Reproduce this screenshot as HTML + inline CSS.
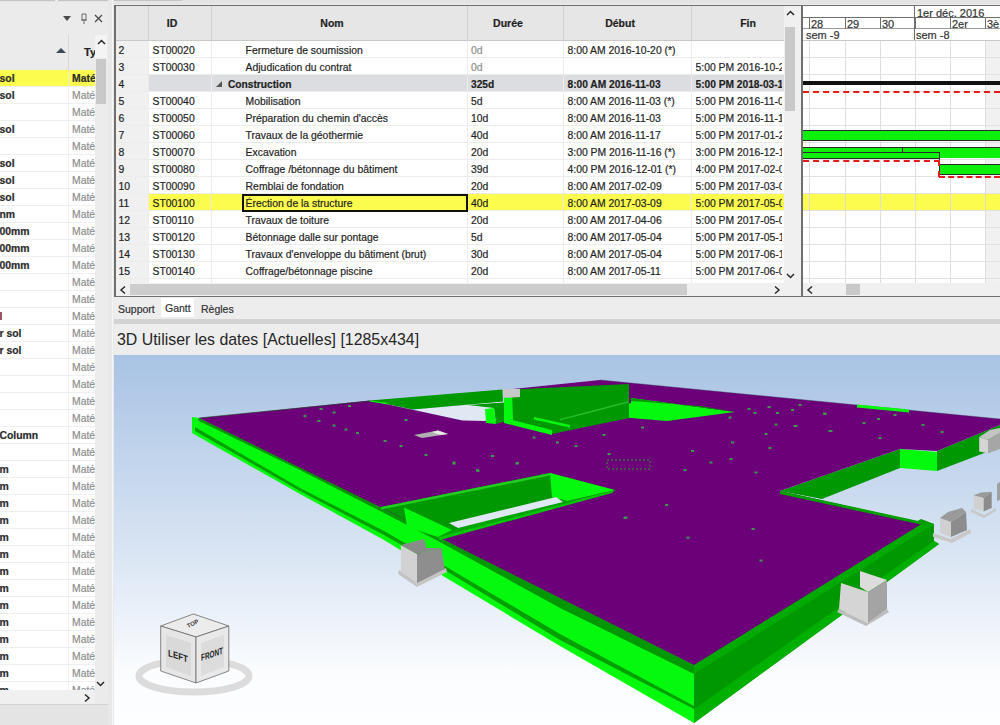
<!DOCTYPE html><html><head><meta charset="utf-8"><style>
*{margin:0;padding:0;box-sizing:border-box}
html,body{width:1000px;height:725px;overflow:hidden;background:#ececec;font-family:"Liberation Sans",sans-serif;color:#1f1f1f}
.a{position:absolute}
.t{position:absolute;white-space:nowrap;font-size:10.4px;line-height:17px;height:17px;-webkit-text-stroke:0.2px currentColor}
.b{font-weight:bold}
.g{color:#8d8d8d}
</style></head><body>
<div class="a" style="left:0px;top:0px;width:1000px;height:4px;background:#e4e4e4;"></div>
<div class="a" style="left:0px;top:0px;width:182px;height:1px;background:#c4c4c4;"></div>
<div class="a" style="left:55px;top:0px;width:3px;height:1px;background:#eeeeee;"></div>
<div class="a" style="left:0px;top:2px;width:108px;height:703px;background:#ebebeb;"></div>
<svg class="a" style="left:60px;top:12px" width="46" height="14" viewBox="0 0 46 14"><path d="M3 4 L11 4 L7 9 Z" fill="#4a4a4a"/><path d="M22 2 h4 v6 h-4 z M21 8 h6 M24 8 v4" stroke="#6a6a6a" stroke-width="1" fill="none"/><path d="M35 3 L42 10 M42 3 L35 10" stroke="#4a4a4a" stroke-width="1.3"/></svg>
<div class="a" style="left:0px;top:35px;width:95px;height:35px;background:#ebebeb;"></div>
<div class="a" style="left:68px;top:35px;width:1px;height:35px;background:#d8d8d8;"></div>
<svg class="a" style="left:56px;top:47px" width="10" height="7"><path d="M0 6 L5 1 L10 6 Z" fill="#3c4a5a"/></svg>
<div class="t b" style="left:84px;top:44px;font-size:11px;">Ty</div>
<div class="a" style="left:0px;top:70px;width:95px;height:620px;background:#ffffff;"></div>
<div class="a" style="left:0px;top:70px;width:95px;height:17px;background:#fcfc4e;"></div>
<div class="a" style="left:0px;top:86px;width:95px;height:1px;background:#efefef;"></div>
<div class="t b" style="left:-0.5px;top:70px;color:#2b2b2b;">sol</div>
<div class="t b" style="left:72px;top:70px;color:#2b2b2b;">Maté</div>
<div class="a" style="left:0px;top:103px;width:95px;height:1px;background:#efefef;"></div>
<div class="t b" style="left:-0.5px;top:87px;color:#2b2b2b;">sol</div>
<div class="t g" style="left:72px;top:87px;">Maté</div>
<div class="a" style="left:0px;top:120px;width:95px;height:1px;background:#efefef;"></div>
<div class="t g" style="left:72px;top:104px;">Maté</div>
<div class="a" style="left:0px;top:137px;width:95px;height:1px;background:#efefef;"></div>
<div class="t b" style="left:-0.5px;top:121px;color:#2b2b2b;">sol</div>
<div class="t g" style="left:72px;top:121px;">Maté</div>
<div class="a" style="left:0px;top:154px;width:95px;height:1px;background:#efefef;"></div>
<div class="t g" style="left:72px;top:138px;">Maté</div>
<div class="a" style="left:0px;top:171px;width:95px;height:1px;background:#efefef;"></div>
<div class="t b" style="left:-0.5px;top:155px;color:#2b2b2b;">sol</div>
<div class="t g" style="left:72px;top:155px;">Maté</div>
<div class="a" style="left:0px;top:188px;width:95px;height:1px;background:#efefef;"></div>
<div class="t b" style="left:-0.5px;top:172px;color:#2b2b2b;">sol</div>
<div class="t g" style="left:72px;top:172px;">Maté</div>
<div class="a" style="left:0px;top:205px;width:95px;height:1px;background:#efefef;"></div>
<div class="t b" style="left:-0.5px;top:189px;color:#2b2b2b;">sol</div>
<div class="t g" style="left:72px;top:189px;">Maté</div>
<div class="a" style="left:0px;top:222px;width:95px;height:1px;background:#efefef;"></div>
<div class="t b" style="left:-0.5px;top:206px;color:#2b2b2b;">nm</div>
<div class="t g" style="left:72px;top:206px;">Maté</div>
<div class="a" style="left:0px;top:239px;width:95px;height:1px;background:#efefef;"></div>
<div class="t b" style="left:-0.5px;top:223px;color:#2b2b2b;">00mm</div>
<div class="t g" style="left:72px;top:223px;">Maté</div>
<div class="a" style="left:0px;top:256px;width:95px;height:1px;background:#efefef;"></div>
<div class="t b" style="left:-0.5px;top:240px;color:#2b2b2b;">00mm</div>
<div class="t g" style="left:72px;top:240px;">Maté</div>
<div class="a" style="left:0px;top:273px;width:95px;height:1px;background:#efefef;"></div>
<div class="t b" style="left:-0.5px;top:257px;color:#2b2b2b;">00mm</div>
<div class="t g" style="left:72px;top:257px;">Maté</div>
<div class="a" style="left:0px;top:290px;width:95px;height:1px;background:#efefef;"></div>
<div class="t g" style="left:72px;top:274px;">Maté</div>
<div class="a" style="left:0px;top:307px;width:95px;height:1px;background:#efefef;"></div>
<div class="t g" style="left:72px;top:291px;">Maté</div>
<div class="a" style="left:0px;top:324px;width:95px;height:1px;background:#efefef;"></div>
<div class="t b" style="left:-0.5px;top:308px;color:#7a2a2a;">l</div>
<div class="t g" style="left:72px;top:308px;">Maté</div>
<div class="a" style="left:0px;top:341px;width:95px;height:1px;background:#efefef;"></div>
<div class="t b" style="left:-0.5px;top:325px;color:#2b2b2b;">r sol</div>
<div class="t g" style="left:72px;top:325px;">Maté</div>
<div class="a" style="left:0px;top:358px;width:95px;height:1px;background:#efefef;"></div>
<div class="t b" style="left:-0.5px;top:342px;color:#2b2b2b;">r sol</div>
<div class="t g" style="left:72px;top:342px;">Maté</div>
<div class="a" style="left:0px;top:375px;width:95px;height:1px;background:#efefef;"></div>
<div class="t g" style="left:72px;top:359px;">Maté</div>
<div class="a" style="left:0px;top:392px;width:95px;height:1px;background:#efefef;"></div>
<div class="t g" style="left:72px;top:376px;">Maté</div>
<div class="a" style="left:0px;top:409px;width:95px;height:1px;background:#efefef;"></div>
<div class="t g" style="left:72px;top:393px;">Maté</div>
<div class="a" style="left:0px;top:426px;width:95px;height:1px;background:#efefef;"></div>
<div class="t g" style="left:72px;top:410px;">Maté</div>
<div class="a" style="left:0px;top:443px;width:95px;height:1px;background:#efefef;"></div>
<div class="t b" style="left:-0.5px;top:427px;color:#2b2b2b;">Column</div>
<div class="t g" style="left:72px;top:427px;">Maté</div>
<div class="a" style="left:0px;top:460px;width:95px;height:1px;background:#efefef;"></div>
<div class="t g" style="left:72px;top:444px;">Maté</div>
<div class="a" style="left:0px;top:477px;width:95px;height:1px;background:#efefef;"></div>
<div class="t b" style="left:-0.5px;top:461px;color:#2b2b2b;">m</div>
<div class="t g" style="left:72px;top:461px;">Maté</div>
<div class="a" style="left:0px;top:494px;width:95px;height:1px;background:#efefef;"></div>
<div class="t b" style="left:-0.5px;top:478px;color:#2b2b2b;">m</div>
<div class="t g" style="left:72px;top:478px;">Maté</div>
<div class="a" style="left:0px;top:511px;width:95px;height:1px;background:#efefef;"></div>
<div class="t b" style="left:-0.5px;top:495px;color:#2b2b2b;">m</div>
<div class="t g" style="left:72px;top:495px;">Maté</div>
<div class="a" style="left:0px;top:528px;width:95px;height:1px;background:#efefef;"></div>
<div class="t b" style="left:-0.5px;top:512px;color:#2b2b2b;">m</div>
<div class="t g" style="left:72px;top:512px;">Maté</div>
<div class="a" style="left:0px;top:545px;width:95px;height:1px;background:#efefef;"></div>
<div class="t b" style="left:-0.5px;top:529px;color:#2b2b2b;">m</div>
<div class="t g" style="left:72px;top:529px;">Maté</div>
<div class="a" style="left:0px;top:562px;width:95px;height:1px;background:#efefef;"></div>
<div class="t b" style="left:-0.5px;top:546px;color:#2b2b2b;">m</div>
<div class="t g" style="left:72px;top:546px;">Maté</div>
<div class="a" style="left:0px;top:579px;width:95px;height:1px;background:#efefef;"></div>
<div class="t b" style="left:-0.5px;top:563px;color:#2b2b2b;">m</div>
<div class="t g" style="left:72px;top:563px;">Maté</div>
<div class="a" style="left:0px;top:596px;width:95px;height:1px;background:#efefef;"></div>
<div class="t b" style="left:-0.5px;top:580px;color:#2b2b2b;">m</div>
<div class="t g" style="left:72px;top:580px;">Maté</div>
<div class="a" style="left:0px;top:613px;width:95px;height:1px;background:#efefef;"></div>
<div class="t b" style="left:-0.5px;top:597px;color:#2b2b2b;">m</div>
<div class="t g" style="left:72px;top:597px;">Maté</div>
<div class="a" style="left:0px;top:630px;width:95px;height:1px;background:#efefef;"></div>
<div class="t b" style="left:-0.5px;top:614px;color:#2b2b2b;">m</div>
<div class="t g" style="left:72px;top:614px;">Maté</div>
<div class="a" style="left:0px;top:647px;width:95px;height:1px;background:#efefef;"></div>
<div class="t b" style="left:-0.5px;top:631px;color:#2b2b2b;">m</div>
<div class="t g" style="left:72px;top:631px;">Maté</div>
<div class="a" style="left:0px;top:664px;width:95px;height:1px;background:#efefef;"></div>
<div class="t b" style="left:-0.5px;top:648px;color:#2b2b2b;">m</div>
<div class="t g" style="left:72px;top:648px;">Maté</div>
<div class="a" style="left:0px;top:681px;width:95px;height:1px;background:#efefef;"></div>
<div class="t b" style="left:-0.5px;top:665px;color:#2b2b2b;">m</div>
<div class="t g" style="left:72px;top:665px;">Maté</div>
<div class="a" style="left:0px;top:698px;width:95px;height:1px;background:#efefef;"></div>
<div class="t b" style="left:-0.5px;top:682px;color:#2b2b2b;">m</div>
<div class="t g" style="left:72px;top:682px;">Maté</div>
<div class="a" style="left:68px;top:70px;width:1px;height:620px;background:#f0f0f0;"></div>
<div class="a" style="left:95px;top:35px;width:13px;height:655px;background:#ececec;"></div>
<div class="a" style="left:95px;top:35px;width:12px;height:23px;background:#f4f4f4;"></div>
<svg class="a" style="left:96px;top:38px" width="11" height="8"><path d="M2 6 L5.5 2.5 L9 6" stroke="#2a2a2a" stroke-width="1.5" fill="none"/></svg>
<div class="a" style="left:96px;top:59px;width:10px;height:45px;background:#c9c9c9;"></div>
<svg class="a" style="left:95px;top:680px" width="11" height="8"><path d="M2 2 L5.5 5.5 L9 2" stroke="#2a2a2a" stroke-width="1.5" fill="none"/></svg>
<div class="a" style="left:0px;top:690px;width:95px;height:15px;background:#f0f0f0;"></div>
<svg class="a" style="left:83px;top:693px" width="8" height="10"><path d="M2 1.5 L6 5 L2 8.5" stroke="#2a2a2a" stroke-width="1.5" fill="none"/></svg>
<div class="a" style="left:0px;top:704px;width:108px;height:1px;background:#d2d2d2;"></div>
<div class="a" style="left:0px;top:705px;width:108px;height:20px;background:#e4e4e4;"></div>
<div class="a" style="left:108px;top:0px;width:6px;height:725px;background:#e8e8e8;"></div>
<div class="a" style="left:112px;top:0px;width:1px;height:725px;background:#f6f6f6;"></div>
<div class="a" style="left:114px;top:5px;width:688px;height:292px;background:#6f6f6f;"></div>
<div class="a" style="left:116px;top:6px;width:685px;height:290px;background:#ffffff;"></div>
<div class="a" style="left:116px;top:6px;width:668px;height:35px;background:#e6e6e6;"></div>
<div class="a" style="left:116px;top:40px;width:668px;height:1px;background:#c8c8c8;"></div>
<div class="a" style="left:148px;top:6px;width:1px;height:35px;background:#cfcfcf;"></div>
<div class="a" style="left:211px;top:6px;width:1px;height:35px;background:#cfcfcf;"></div>
<div class="a" style="left:467px;top:6px;width:1px;height:35px;background:#cfcfcf;"></div>
<div class="a" style="left:563px;top:6px;width:1px;height:35px;background:#cfcfcf;"></div>
<div class="a" style="left:691px;top:6px;width:1px;height:35px;background:#cfcfcf;"></div>
<div class="t b" style="left:142px;width:60px;text-align:center;top:15px;font-size:10.5px">ID</div>
<div class="t b" style="left:302px;width:60px;text-align:center;top:15px;font-size:10.5px">Nom</div>
<div class="t b" style="left:478px;width:60px;text-align:center;top:15px;font-size:10.5px">Durée</div>
<div class="t b" style="left:590px;width:60px;text-align:center;top:15px;font-size:10.5px">Début</div>
<div class="t b" style="left:718px;width:60px;text-align:center;top:15px;font-size:10.5px">Fin</div>
<div class="a" style="left:116px;top:41px;width:33px;height:242px;background:#f0f0f0;"></div>
<div class="a" style="left:116px;top:57px;width:668px;height:1px;background:#ececec;"></div>
<div class="t " style="left:118.5px;top:41.5px;">2</div>
<div class="t " style="left:152.5px;top:41.5px;">ST00020</div>
<div class="t " style="left:245.6px;top:41.5px;">Fermeture de soumission</div>
<div class="t  g" style="left:471px;top:41.5px;">0d</div>
<div class="t " style="left:567.5px;top:41.5px;">8:00 AM 2016-10-20 (*)</div>
<div class="t " style="left:695.5px;top:41.5px;width:86px;overflow:hidden;"></div>
<div class="a" style="left:116px;top:74px;width:668px;height:1px;background:#ececec;"></div>
<div class="t " style="left:118.5px;top:58.5px;">3</div>
<div class="t " style="left:152.5px;top:58.5px;">ST00030</div>
<div class="t " style="left:245.6px;top:58.5px;">Adjudication du contrat</div>
<div class="t  g" style="left:471px;top:58.5px;">0d</div>
<div class="t " style="left:567.5px;top:58.5px;"></div>
<div class="t " style="left:695.5px;top:58.5px;width:86px;overflow:hidden;">5:00 PM 2016-10-27</div>
<div class="a" style="left:149px;top:75px;width:635px;height:17px;background:#dcdde1;"></div>
<div class="a" style="left:116px;top:91px;width:668px;height:1px;background:#ececec;"></div>
<div class="t " style="left:118.5px;top:75.5px;">4</div>
<div class="t " style="left:152.5px;top:75.5px;"></div>
<svg class="a" style="left:216px;top:80.5px" width="7" height="7"><path d="M6 0 L6 6 L0 6 Z" fill="#555"/></svg>
<div class="t b" style="left:228px;top:75.5px;font-size:10.2px;">Construction</div>
<div class="t b" style="left:471px;top:75.5px;font-size:10.2px;">325d</div>
<div class="t b" style="left:567.5px;top:75.5px;font-size:10.2px;">8:00 AM 2016-11-03</div>
<div class="t b" style="left:695.5px;top:75.5px;width:86px;overflow:hidden;font-size:10.2px;">5:00 PM 2018-03-14</div>
<div class="a" style="left:116px;top:108px;width:668px;height:1px;background:#ececec;"></div>
<div class="t " style="left:118.5px;top:92.5px;">5</div>
<div class="t " style="left:152.5px;top:92.5px;">ST00040</div>
<div class="t " style="left:245.6px;top:92.5px;">Mobilisation</div>
<div class="t " style="left:471px;top:92.5px;">5d</div>
<div class="t " style="left:567.5px;top:92.5px;">8:00 AM 2016-11-03 (*)</div>
<div class="t " style="left:695.5px;top:92.5px;width:86px;overflow:hidden;">5:00 PM 2016-11-09</div>
<div class="a" style="left:116px;top:125px;width:668px;height:1px;background:#ececec;"></div>
<div class="t " style="left:118.5px;top:109.5px;">6</div>
<div class="t " style="left:152.5px;top:109.5px;">ST00050</div>
<div class="t " style="left:245.6px;top:109.5px;">Préparation du chemin d'accès</div>
<div class="t " style="left:471px;top:109.5px;">10d</div>
<div class="t " style="left:567.5px;top:109.5px;">8:00 AM 2016-11-03</div>
<div class="t " style="left:695.5px;top:109.5px;width:86px;overflow:hidden;">5:00 PM 2016-11-16</div>
<div class="a" style="left:116px;top:142px;width:668px;height:1px;background:#ececec;"></div>
<div class="t " style="left:118.5px;top:126.5px;">7</div>
<div class="t " style="left:152.5px;top:126.5px;">ST00060</div>
<div class="t " style="left:245.6px;top:126.5px;">Travaux de la géothermie</div>
<div class="t " style="left:471px;top:126.5px;">40d</div>
<div class="t " style="left:567.5px;top:126.5px;">8:00 AM 2016-11-17</div>
<div class="t " style="left:695.5px;top:126.5px;width:86px;overflow:hidden;">5:00 PM 2017-01-26</div>
<div class="a" style="left:116px;top:159px;width:668px;height:1px;background:#ececec;"></div>
<div class="t " style="left:118.5px;top:143.5px;">8</div>
<div class="t " style="left:152.5px;top:143.5px;">ST00070</div>
<div class="t " style="left:245.6px;top:143.5px;">Excavation</div>
<div class="t " style="left:471px;top:143.5px;">20d</div>
<div class="t " style="left:567.5px;top:143.5px;">3:00 PM 2016-11-16 (*)</div>
<div class="t " style="left:695.5px;top:143.5px;width:86px;overflow:hidden;">3:00 PM 2016-12-14</div>
<div class="a" style="left:116px;top:176px;width:668px;height:1px;background:#ececec;"></div>
<div class="t " style="left:118.5px;top:160.5px;">9</div>
<div class="t " style="left:152.5px;top:160.5px;">ST00080</div>
<div class="t " style="left:245.6px;top:160.5px;">Coffrage /bétonnage du bâtiment</div>
<div class="t " style="left:471px;top:160.5px;">39d</div>
<div class="t " style="left:567.5px;top:160.5px;">4:00 PM 2016-12-01 (*)</div>
<div class="t " style="left:695.5px;top:160.5px;width:86px;overflow:hidden;">4:00 PM 2017-02-08</div>
<div class="a" style="left:116px;top:193px;width:668px;height:1px;background:#ececec;"></div>
<div class="t " style="left:118.5px;top:177.5px;">10</div>
<div class="t " style="left:152.5px;top:177.5px;">ST00090</div>
<div class="t " style="left:245.6px;top:177.5px;">Remblai de fondation</div>
<div class="t " style="left:471px;top:177.5px;">20d</div>
<div class="t " style="left:567.5px;top:177.5px;">8:00 AM 2017-02-09</div>
<div class="t " style="left:695.5px;top:177.5px;width:86px;overflow:hidden;">5:00 PM 2017-03-08</div>
<div class="a" style="left:149px;top:194px;width:635px;height:17px;background:#fcfc4e;"></div>
<div class="a" style="left:116px;top:210px;width:668px;height:1px;background:#ececec;"></div>
<div class="t " style="left:118.5px;top:194.5px;">11</div>
<div class="t " style="left:152.5px;top:194.5px;">ST00100</div>
<div class="t " style="left:245.6px;top:194.5px;">Érection de la structure</div>
<div class="t " style="left:471px;top:194.5px;">40d</div>
<div class="t " style="left:567.5px;top:194.5px;">8:00 AM 2017-03-09</div>
<div class="t " style="left:695.5px;top:194.5px;width:86px;overflow:hidden;">5:00 PM 2017-05-03</div>
<div class="a" style="left:116px;top:227px;width:668px;height:1px;background:#ececec;"></div>
<div class="t " style="left:118.5px;top:211.5px;">12</div>
<div class="t " style="left:152.5px;top:211.5px;">ST00110</div>
<div class="t " style="left:245.6px;top:211.5px;">Travaux de toiture</div>
<div class="t " style="left:471px;top:211.5px;">20d</div>
<div class="t " style="left:567.5px;top:211.5px;">8:00 AM 2017-04-06</div>
<div class="t " style="left:695.5px;top:211.5px;width:86px;overflow:hidden;">5:00 PM 2017-05-03</div>
<div class="a" style="left:116px;top:244px;width:668px;height:1px;background:#ececec;"></div>
<div class="t " style="left:118.5px;top:228.5px;">13</div>
<div class="t " style="left:152.5px;top:228.5px;">ST00120</div>
<div class="t " style="left:245.6px;top:228.5px;">Bétonnage dalle sur pontage</div>
<div class="t " style="left:471px;top:228.5px;">5d</div>
<div class="t " style="left:567.5px;top:228.5px;">8:00 AM 2017-05-04</div>
<div class="t " style="left:695.5px;top:228.5px;width:86px;overflow:hidden;">5:00 PM 2017-05-10</div>
<div class="a" style="left:116px;top:261px;width:668px;height:1px;background:#ececec;"></div>
<div class="t " style="left:118.5px;top:245.5px;">14</div>
<div class="t " style="left:152.5px;top:245.5px;">ST00130</div>
<div class="t " style="left:245.6px;top:245.5px;">Travaux d'enveloppe du bâtiment (brut)</div>
<div class="t " style="left:471px;top:245.5px;">30d</div>
<div class="t " style="left:567.5px;top:245.5px;">8:00 AM 2017-05-04</div>
<div class="t " style="left:695.5px;top:245.5px;width:86px;overflow:hidden;">5:00 PM 2017-06-14</div>
<div class="a" style="left:116px;top:278px;width:668px;height:1px;background:#ececec;"></div>
<div class="t " style="left:118.5px;top:262.5px;">15</div>
<div class="t " style="left:152.5px;top:262.5px;">ST00140</div>
<div class="t " style="left:245.6px;top:262.5px;">Coffrage/bétonnage piscine</div>
<div class="t " style="left:471px;top:262.5px;">20d</div>
<div class="t " style="left:567.5px;top:262.5px;">8:00 AM 2017-05-11</div>
<div class="t " style="left:695.5px;top:262.5px;width:86px;overflow:hidden;">5:00 PM 2017-06-07</div>
<div class="a" style="left:116px;top:295px;width:668px;height:1px;background:#ececec;"></div>
<div class="t " style="left:118.5px;top:279.5px;">16</div>
<div class="t " style="left:152.5px;top:279.5px;">ST00150</div>
<div class="t " style="left:245.6px;top:279.5px;"></div>
<div class="t " style="left:471px;top:279.5px;"></div>
<div class="t " style="left:567.5px;top:279.5px;"></div>
<div class="t " style="left:695.5px;top:279.5px;width:86px;overflow:hidden;"></div>
<div class="a" style="left:148px;top:41px;width:1px;height:242px;background:#ececec;"></div>
<div class="a" style="left:211px;top:41px;width:1px;height:242px;background:#ececec;"></div>
<div class="a" style="left:467px;top:41px;width:1px;height:242px;background:#ececec;"></div>
<div class="a" style="left:563px;top:41px;width:1px;height:242px;background:#ececec;"></div>
<div class="a" style="left:691px;top:41px;width:1px;height:242px;background:#ececec;"></div>
<div class="a" style="left:242px;top:194px;width:226px;height:18px;background:transparent;border:2px solid #111;"></div>
<div class="a" style="left:784px;top:6px;width:17px;height:277px;background:#f0f0f0;"></div>
<svg class="a" style="left:785px;top:9px" width="11" height="8"><path d="M2 6 L5.5 2.5 L9 6" stroke="#2a2a2a" stroke-width="1.5" fill="none"/></svg>
<div class="a" style="left:785px;top:27px;width:10px;height:84px;background:#c9c9c9;"></div>
<svg class="a" style="left:785px;top:272px" width="11" height="8"><path d="M2 2 L5.5 5.5 L9 2" stroke="#2a2a2a" stroke-width="1.5" fill="none"/></svg>
<div class="a" style="left:116px;top:283px;width:685px;height:13px;background:#f0f0f0;"></div>
<svg class="a" style="left:119px;top:285px" width="8" height="10"><path d="M6 1.5 L2 5 L6 8.5" stroke="#2a2a2a" stroke-width="1.5" fill="none"/></svg>
<div class="a" style="left:130px;top:284px;width:557px;height:11px;background:#cdcdcd;"></div>
<svg class="a" style="left:773px;top:285px" width="8" height="10"><path d="M2 1.5 L6 5 L2 8.5" stroke="#2a2a2a" stroke-width="1.5" fill="none"/></svg>
<div class="a" style="left:801px;top:5px;width:199px;height:292px;background:#6f6f6f;"></div>
<div class="a" style="left:803px;top:6px;width:197px;height:290px;background:#ffffff;"></div>
<div class="a" style="left:803px;top:17px;width:197px;height:1px;background:#6f6f6f;"></div>
<div class="a" style="left:803px;top:28px;width:197px;height:1px;background:#9a9a9a;"></div>
<div class="a" style="left:809px;top:18px;width:1px;height:11px;background:#6f6f6f;"></div>
<div class="a" style="left:845px;top:18px;width:1px;height:11px;background:#6f6f6f;"></div>
<div class="a" style="left:880px;top:18px;width:1px;height:11px;background:#6f6f6f;"></div>
<div class="a" style="left:915px;top:18px;width:1px;height:11px;background:#6f6f6f;"></div>
<div class="a" style="left:950px;top:18px;width:1px;height:11px;background:#6f6f6f;"></div>
<div class="a" style="left:985px;top:18px;width:1px;height:11px;background:#6f6f6f;"></div>
<div class="a" style="left:914px;top:6px;width:1px;height:35px;background:#6f6f6f;"></div>
<div class="t" style="left:917px;top:7px;line-height:13px;font-size:11px;color:#333">1er déc. 2016</div>
<div class="t" style="left:811px;top:18px;line-height:13px;font-size:11px;color:#333">28</div>
<div class="t" style="left:847px;top:18px;line-height:13px;font-size:11px;color:#333">29</div>
<div class="t" style="left:882px;top:18px;line-height:13px;font-size:11px;color:#333">30</div>
<div class="t" style="left:952px;top:18px;line-height:13px;font-size:11px;color:#333">2er</div>
<div class="t" style="left:987px;top:18px;line-height:13px;font-size:11px;color:#333">3è</div>
<div class="t" style="left:806px;top:29px;line-height:13px;font-size:11px;color:#333">sem -9</div>
<div class="t" style="left:916px;top:29px;line-height:13px;font-size:11px;color:#333">sem -8</div>
<div class="a" style="left:803px;top:40px;width:197px;height:1px;background:#c8c8c8;"></div>
<div class="a" style="left:986px;top:41px;width:14px;height:242px;background:#f1f1f1;"></div>
<div class="a" style="left:803px;top:57px;width:197px;height:1px;background:#e2e2e2;"></div>
<div class="a" style="left:803px;top:74px;width:197px;height:1px;background:#e2e2e2;"></div>
<div class="a" style="left:803px;top:91px;width:197px;height:1px;background:#e2e2e2;"></div>
<div class="a" style="left:803px;top:108px;width:197px;height:1px;background:#e2e2e2;"></div>
<div class="a" style="left:803px;top:125px;width:197px;height:1px;background:#e2e2e2;"></div>
<div class="a" style="left:803px;top:142px;width:197px;height:1px;background:#e2e2e2;"></div>
<div class="a" style="left:803px;top:159px;width:197px;height:1px;background:#e2e2e2;"></div>
<div class="a" style="left:803px;top:176px;width:197px;height:1px;background:#e2e2e2;"></div>
<div class="a" style="left:803px;top:193px;width:197px;height:1px;background:#e2e2e2;"></div>
<div class="a" style="left:803px;top:194px;width:197px;height:17px;background:#fcfc4e;"></div>
<div class="a" style="left:803px;top:210px;width:197px;height:1px;background:#e2e2e2;"></div>
<div class="a" style="left:803px;top:227px;width:197px;height:1px;background:#e2e2e2;"></div>
<div class="a" style="left:803px;top:244px;width:197px;height:1px;background:#e2e2e2;"></div>
<div class="a" style="left:803px;top:261px;width:197px;height:1px;background:#e2e2e2;"></div>
<div class="a" style="left:803px;top:278px;width:197px;height:1px;background:#e2e2e2;"></div>
<div class="a" style="left:803px;top:295px;width:197px;height:1px;background:#e2e2e2;"></div>
<div class="a" style="left:809px;top:41px;width:1px;height:242px;background:#dedede;"></div>
<div class="a" style="left:845px;top:41px;width:1px;height:242px;background:#dedede;"></div>
<div class="a" style="left:880px;top:41px;width:1px;height:242px;background:#dedede;"></div>
<div class="a" style="left:915px;top:41px;width:1px;height:242px;background:#dedede;"></div>
<div class="a" style="left:950px;top:41px;width:1px;height:242px;background:#dedede;"></div>
<div class="a" style="left:985px;top:41px;width:1px;height:242px;background:#dedede;"></div>
<div class="a" style="left:803px;top:81px;width:197px;height:4px;background:#111;"></div>
<div class="a" style="left:803px;top:91px;width:197px;height:0;border-top:2px dashed #e21b1b"></div>
<div class="a" style="left:803px;top:130px;width:197px;height:11px;background:#0cf00c;border-top:1px solid #2a2a2a;border-bottom:1px solid #2a2a2a"></div>
<div class="a" style="left:803px;top:147px;width:197px;height:11px;background:#0cf00c;border-top:1px solid #2a2a2a;"></div>
<div class="a" style="left:803px;top:152px;width:137px;height:1px;background:#2a2a2a;"></div>
<div class="a" style="left:803px;top:158px;width:137px;height:1px;background:#2a2a2a;"></div>
<div class="a" style="left:902px;top:147px;width:1px;height:6px;background:#2a2a2a;"></div>
<div class="a" style="left:939px;top:152px;width:1px;height:8px;background:#2a2a2a;"></div>
<div class="a" style="left:939px;top:164px;width:61px;height:11px;background:#0cf00c;border:1px solid #2a2a2a;border-right:none"></div>
<div class="a" style="left:803px;top:160px;width:137px;height:0;border-top:2px dashed #e21b1b"></div>
<div class="a" style="left:938px;top:160px;width:0;height:17px;border-left:2px dashed #e21b1b"></div>
<div class="a" style="left:939px;top:176px;width:61px;height:0;border-top:2px dashed #e21b1b"></div>
<div class="a" style="left:803px;top:283px;width:197px;height:13px;background:#f0f0f0;"></div>
<svg class="a" style="left:806px;top:285px" width="8" height="10"><path d="M6 1.5 L2 5 L6 8.5" stroke="#2a2a2a" stroke-width="1.5" fill="none"/></svg>
<div class="a" style="left:846px;top:284px;width:14px;height:11px;background:#c9c9c9;"></div>
<div class="a" style="left:114px;top:297px;width:886px;height:22px;background:#ededed;"></div>
<div class="a" style="left:161px;top:298px;width:33px;height:19px;background:#ffffff;"></div>
<div class="t" style="left:118px;top:301.5px;font-size:10.5px;line-height:15px;color:#333">Support</div>
<div class="t" style="left:165px;top:300.5px;font-size:10.5px;line-height:15px;color:#333">Gantt</div>
<div class="t" style="left:201px;top:301.5px;font-size:10.5px;line-height:15px;color:#333">Règles</div>
<div class="a" style="left:114px;top:319px;width:886px;height:5px;background:#d3d3d3;"></div>
<div class="a" style="left:114px;top:324px;width:886px;height:30px;background:#ededed;"></div>
<div class="t" style="left:117px;top:330px;font-size:15.9px;line-height:20px;height:20px;color:#262626;-webkit-text-stroke:0">3D Utiliser les dates [Actuelles] [1285x434]</div>
<div class="a" style="left:114px;top:355px;width:886px;height:370px;background:linear-gradient(#a8c3e4,#dbe6f4 55%,#fafcfe 85%,#fdfeff)"></div>
<svg class="a" style="left:0;top:0" width="1000" height="725" viewBox="0 0 1000 725"><defs><clipPath id="cv"><rect x="114" y="355" width="886" height="370"/></clipPath></defs><g clip-path="url(#cv)"><polygon points="199.0,418.0 300.0,463.0 384.0,506.0 438.0,534.0 560.0,593.0 694.0,662.0 694.0,723.0 560.0,646.0 438.0,573.0 384.0,540.0 300.0,494.0 192.0,433.0" fill="#04fa0c" />
<polygon points="199.0,418.0 300.0,466.0 384.0,509.0 438.0,537.0 560.0,596.0 694.0,665.0 694.0,674.0 560.0,608.0 438.0,541.0 384.0,513.0 300.0,470.0 195.0,419.0" fill="#009800" />
<polygon points="195.0,427.0 300.0,488.0 384.0,531.0 438.0,562.0 560.0,634.0 694.0,706.0 694.0,709.0 560.0,640.0 438.0,566.0 384.0,535.0 300.0,491.0 195.0,431.0" fill="#00a000" />
<polygon points="192.0,417.0 199.0,418.0 195.0,427.0 192.0,433.0" fill="#04fa0c" />
<polygon points="694.0,661.0 921.0,519.0 934.0,524.0 934.0,541.0 939.0,544.0 694.0,723.0" fill="#009800" />
<polygon points="694.0,665.0 923.0,523.0 934.0,524.0 694.0,674.0" fill="#00aa00" />
<polygon points="694.0,709.0 934.0,541.0 939.0,544.0 694.0,723.0" fill="#00b000" />
<polygon points="937.0,451.0 1000.0,425.0 1000.0,447.0 937.0,471.0" fill="#009800" />
<polygon points="900.0,449.0 937.0,452.0 937.0,471.0 900.0,468.0" fill="#04fa0c" />
<polygon points="780.0,491.0 900.0,449.0 900.0,468.0 822.0,499.0" fill="#009800" />
<polygon points="412.0,409.4 503.0,401.4 510.0,402.0 510.0,421.0 486.0,423.0 462.4,420.6" fill="#dfe8f3" />
<polygon points="199.0,418.0 369.6,400.6 462.4,420.6 486.0,421.0 510.0,421.0 504.0,390.0 600.0,380.0 1000.0,419.0 1000.0,425.0 937.0,451.0 900.0,449.0 780.0,491.0 923.0,523.0 694.0,665.0 438.0,537.0 384.0,509.0" fill="#6b0079" />
<polygon points="199.0,417.5 371.0,400.5 371.0,401.5 199.0,418.5" fill="#1a4a1a" opacity="0.6"/>
<polygon points="600.0,379.5 1000.0,418.5 1000.0,419.5 600.0,380.5" fill="#3a3a5a" opacity="0.4"/>
<polygon points="857.0,404.5 909.0,409.5 909.0,412.5 857.0,407.5" fill="#04fa0c" />
<polygon points="780.0,491.0 923.0,522.0 934.0,524.0 923.0,525.0 780.0,494.0" fill="#00a000" />
<polygon points="369.6,400.6 502.4,389.4 503.0,401.4 412.8,409.4" fill="#009800" />
<polygon points="369.6,400.6 388.8,403.0 386.0,404.0 369.6,401.6" fill="#04fa0c" />
<polygon points="468.0,405.0 510.0,402.0 510.0,420.0 496.0,424.0 494.0,408.0" fill="#009800" />
<polygon points="485.0,409.0 494.0,408.0 496.0,424.0 486.0,423.0" fill="#04fa0c" />
<polygon points="504.0,390.0 629.0,384.0 629.0,418.0 552.0,434.0 504.0,422.0" fill="#009800" />
<polygon points="504.0,390.0 512.0,391.0 513.0,420.0 504.0,419.0" fill="#04fa0c" />
<polygon points="504.0,418.0 552.0,430.0 552.0,435.0 504.0,423.0" fill="#04fa0c" />
<polygon points="534.0,417.0 570.0,425.0 570.0,427.5 534.0,419.5" fill="#04fa0c" />
<polygon points="560.0,419.0 629.0,401.0 629.0,402.5 560.0,420.5" fill="#22c022" />
<polygon points="629.0,403.0 640.0,405.0 640.0,418.0 629.0,418.0" fill="#04fa0c" />
<polygon points="631.0,398.0 735.0,412.0 667.0,421.0 631.0,418.0" fill="#04fa0c" />
<polygon points="631.0,398.0 735.0,412.0 700.0,406.0 631.0,401.0" fill="#009800" />
<polygon points="503.0,389.0 520.0,389.0 520.0,397.0 503.0,398.0" fill="#c8c8c8" />
<polygon points="381.0,507.0 550.0,473.0 615.0,490.0 438.0,537.0" fill="#009800" />
<polygon points="550.0,473.0 615.0,490.0 568.0,501.0 552.0,497.0" fill="#04fa0c" />
<polygon points="458.0,528.0 563.0,502.0 615.0,490.0 438.0,537.0" fill="#00a400" />
<polygon points="438.0,537.0 615.0,490.0 612.0,493.0 440.0,540.0" fill="#00c800" />
<polygon points="381.0,507.0 550.0,473.0 550.0,475.5 381.0,509.5" fill="#20d020" />
<polygon points="449.0,523.0 556.0,497.0 563.0,502.0 458.0,528.0" fill="#dfe8f3" />
<polygon points="404.0,507.5 452.0,530.0 438.0,537.0 407.0,527.0" fill="#04fa0c" />
<polygon points="414.0,435.0 438.0,430.5 448.0,434.0 422.0,438.0" fill="#b0b0b0" />
<polygon points="432.0,432.0 438.0,430.5 448.0,434.0 440.0,435.0" fill="#e8e8e8" />
<polygon points="319.5,408.0 322.5,408.0 322.5,410.0 319.5,410.0" fill="#3c9a4a" />
<polygon points="348.0,405.0 351.0,405.0 351.0,407.0 348.0,407.0" fill="#3c9a4a" />
<polygon points="332.5,411.5 335.5,411.5 335.5,413.5 332.5,413.5" fill="#3c9a4a" />
<polygon points="303.5,415.0 306.5,415.0 306.5,417.0 303.5,417.0" fill="#3c9a4a" />
<polygon points="317.5,420.0 320.5,420.0 320.5,422.0 317.5,422.0" fill="#3c9a4a" />
<polygon points="332.5,424.5 335.5,424.5 335.5,426.5 332.5,426.5" fill="#3c9a4a" />
<polygon points="344.5,428.5 347.5,428.5 347.5,430.5 344.5,430.5" fill="#3c9a4a" />
<polygon points="356.0,432.0 359.0,432.0 359.0,434.0 356.0,434.0" fill="#3c9a4a" />
<polygon points="404.5,419.0 407.5,419.0 407.5,421.0 404.5,421.0" fill="#3c9a4a" />
<polygon points="383.5,440.0 386.5,440.0 386.5,442.0 383.5,442.0" fill="#3c9a4a" />
<polygon points="399.5,445.0 402.5,445.0 402.5,447.0 399.5,447.0" fill="#3c9a4a" />
<polygon points="424.5,454.0 427.5,454.0 427.5,456.0 424.5,456.0" fill="#3c9a4a" />
<polygon points="452.5,461.5 455.5,461.5 455.5,463.5 452.5,463.5" fill="#3c9a4a" />
<polygon points="476.0,469.0 479.0,469.0 479.0,471.0 476.0,471.0" fill="#3c9a4a" />
<polygon points="491.0,455.0 494.0,455.0 494.0,457.0 491.0,457.0" fill="#3c9a4a" />
<polygon points="516.0,462.0 519.0,462.0 519.0,464.0 516.0,464.0" fill="#3c9a4a" />
<polygon points="532.5,436.5 535.5,436.5 535.5,438.5 532.5,438.5" fill="#3c9a4a" />
<polygon points="556.0,441.5 559.0,441.5 559.0,443.5 556.0,443.5" fill="#3c9a4a" />
<polygon points="574.5,445.0 577.5,445.0 577.5,447.0 574.5,447.0" fill="#3c9a4a" />
<polygon points="602.5,434.0 605.5,434.0 605.5,436.0 602.5,436.0" fill="#3c9a4a" />
<polygon points="607.5,453.0 610.5,453.0 610.5,455.0 607.5,455.0" fill="#3c9a4a" />
<polygon points="641.0,426.5 644.0,426.5 644.0,428.5 641.0,428.5" fill="#3c9a4a" />
<polygon points="691.0,450.0 694.0,450.0 694.0,452.0 691.0,452.0" fill="#3c9a4a" />
<polygon points="683.5,469.0 686.5,469.0 686.5,471.0 683.5,471.0" fill="#3c9a4a" />
<polygon points="709.5,461.5 712.5,461.5 712.5,463.5 709.5,463.5" fill="#3c9a4a" />
<polygon points="729.5,458.0 732.5,458.0 732.5,460.0 729.5,460.0" fill="#3c9a4a" />
<polygon points="731.0,441.5 734.0,441.5 734.0,443.5 731.0,443.5" fill="#3c9a4a" />
<polygon points="768.5,447.0 771.5,447.0 771.5,449.0 768.5,449.0" fill="#3c9a4a" />
<polygon points="764.5,433.0 767.5,433.0 767.5,435.0 764.5,435.0" fill="#3c9a4a" />
<polygon points="754.5,471.5 757.5,471.5 757.5,473.5 754.5,473.5" fill="#3c9a4a" />
<polygon points="774.5,423.5 777.5,423.5 777.5,425.5 774.5,425.5" fill="#3c9a4a" />
<polygon points="728.5,416.5 731.5,416.5 731.5,418.5 728.5,418.5" fill="#3c9a4a" />
<polygon points="747.5,408.0 750.5,408.0 750.5,410.0 747.5,410.0" fill="#3c9a4a" />
<polygon points="753.5,412.0 756.5,412.0 756.5,414.0 753.5,414.0" fill="#3c9a4a" />
<polygon points="767.5,406.0 770.5,406.0 770.5,408.0 767.5,408.0" fill="#3c9a4a" />
<polygon points="776.0,412.0 779.0,412.0 779.0,414.0 776.0,414.0" fill="#3c9a4a" />
<polygon points="791.0,409.0 794.0,409.0 794.0,411.0 791.0,411.0" fill="#3c9a4a" />
<polygon points="823.5,413.0 826.5,413.0 826.5,415.0 823.5,415.0" fill="#3c9a4a" />
<polygon points="829.5,430.0 832.5,430.0 832.5,432.0 829.5,432.0" fill="#3c9a4a" />
<polygon points="794.5,425.0 797.5,425.0 797.5,427.0 794.5,427.0" fill="#3c9a4a" />
<polygon points="798.5,404.0 801.5,404.0 801.5,406.0 798.5,406.0" fill="#3c9a4a" />
<polygon points="823.0,412.5 826.0,412.5 826.0,414.5 823.0,414.5" fill="#3c9a4a" />
<polygon points="877.0,418.0 880.0,418.0 880.0,420.0 877.0,420.0" fill="#3c9a4a" />
<polygon points="893.5,414.0 896.5,414.0 896.5,416.0 893.5,416.0" fill="#3c9a4a" />
<polygon points="862.5,422.0 865.5,422.0 865.5,424.0 862.5,424.0" fill="#3c9a4a" />
<polygon points="828.5,430.0 831.5,430.0 831.5,432.0 828.5,432.0" fill="#3c9a4a" />
<polygon points="878.5,437.0 881.5,437.0 881.5,439.0 878.5,439.0" fill="#3c9a4a" />
<polygon points="921.5,424.0 924.5,424.0 924.5,426.0 921.5,426.0" fill="#3c9a4a" />
<polygon points="940.5,431.0 943.5,431.0 943.5,433.0 940.5,433.0" fill="#3c9a4a" />
<polygon points="793.5,425.0 796.5,425.0 796.5,427.0 793.5,427.0" fill="#3c9a4a" />
<polygon points="624.5,516.5 627.5,516.5 627.5,518.5 624.5,518.5" fill="#3c9a4a" />
<polygon points="665.1,504.0 668.1,504.0 668.1,506.0 665.1,506.0" fill="#3c9a4a" />
<polygon points="686.5,536.7 689.5,536.7 689.5,538.7 686.5,538.7" fill="#3c9a4a" />
<polygon points="751.5,528.0 754.5,528.0 754.5,530.0 751.5,530.0" fill="#3c9a4a" />
<polygon points="759.5,559.5 762.5,559.5 762.5,561.5 759.5,561.5" fill="#3c9a4a" />
<polygon points="452.5,462.6 455.5,462.6 455.5,464.6 452.5,464.6" fill="#3c9a4a" />
<polygon points="476.5,470.0 479.5,470.0 479.5,472.0 476.5,472.0" fill="#3c9a4a" />
<polygon points="515.5,462.6 518.5,462.6 518.5,464.6 515.5,464.6" fill="#3c9a4a" />
<polygon points="623.5,517.0 626.5,517.0 626.5,519.0 623.5,519.0" fill="#3c9a4a" />
<polygon points="607,460 650,460 650,469 607,469" fill="none" stroke="#2a9a2a" stroke-width="1" stroke-dasharray="2,2" transform="skewX(0)"/>
<polygon points="839.0,609.0 868.0,623.0 887.0,609.0 889.0,612.0 866.0,626.0 837.0,612.0" fill="#bdbdbd" />
<polygon points="860.0,571.0 887.0,580.0 868.0,592.0 860.0,587.0" fill="#dcdcdc" />
<polygon points="868.0,592.0 887.0,580.0 887.0,609.0 868.0,623.0" fill="#a4a4a4" />
<polygon points="841.0,583.0 868.0,592.0 868.0,623.0 839.0,609.0" fill="#d5d5d5" />
<polygon points="399.0,570.0 417.0,582.0 446.0,568.0 447.0,572.0 417.0,587.0 398.0,574.0" fill="#c4c4c4" />
<polygon points="400.8,545.0 417.0,554.0 417.0,583.0 401.0,571.0" fill="#d2d2d2" />
<polygon points="417.0,554.0 441.4,548.0 444.7,569.0 417.0,583.0" fill="#8e8e8e" />
<polygon points="400.8,545.0 424.0,539.0 426.5,548.0 441.4,548.0 417.0,554.0" fill="#8a8a8a" />
<polygon points="933.0,533.0 951.0,539.0 970.0,529.0 971.0,533.0 952.0,543.0 933.0,537.0" fill="#c8c8c8" />
<polygon points="940.0,518.0 951.0,522.0 951.0,537.0 940.0,533.0" fill="#d0d0d0" />
<polygon points="951.0,522.0 966.0,512.0 967.0,530.0 951.0,537.0" fill="#8c8c8c" />
<polygon points="940.0,518.0 948.0,512.0 962.0,508.0 966.0,512.0 951.0,522.0" fill="#9a9a9a" />
<polygon points="971.0,509.0 984.0,515.0 996.0,508.0 996.0,511.0 984.0,518.0 971.0,512.0" fill="#c8c8c8" />
<polygon points="973.8,495.3 983.7,498.0 983.7,511.5 973.8,508.8" fill="#d0d0d0" />
<polygon points="983.7,498.0 991.7,491.7 991.7,507.9 983.7,511.5" fill="#8c8c8c" />
<polygon points="973.8,495.3 981.0,492.6 991.7,491.7 983.7,498.0" fill="#9a9a9a" />
<polygon points="997.0,484.0 1000.0,482.0 1000.0,500.0 997.0,501.0" fill="#a0a0a0" />
<polygon points="979.2,437.0 988.0,439.7 988.0,453.2 979.2,451.4" fill="#d4d4d4" />
<polygon points="988.0,439.7 1000.0,433.0 1000.0,449.0 988.0,453.2" fill="#a6a6a6" />
<polygon points="979.2,437.0 990.0,430.0 1000.0,428.0 1000.0,433.0 988.0,439.7" fill="#c4c4c4" /><ellipse cx="194" cy="676" rx="55" ry="16" fill="none" stroke="#dcdcdc" stroke-width="7"/>
<polygon points="160.7,626 193.4,614 228.8,626 196,637" fill="#ececec" stroke="#6a6a6a" stroke-width="0.8"/>
<polygon points="160.7,626 196,637 196,683 160.7,671" fill="#e6e6e6" stroke="#6a6a6a" stroke-width="0.8"/>
<polygon points="196,637 228.8,626 228.8,671 196,683" fill="#e9e9e9" stroke="#6a6a6a" stroke-width="0.8"/>
<polygon points="166,635 191,643 191,676 166,667" fill="#d9d9d9"/>
<polygon points="201,643 224,635 224,667 201,676" fill="#dcdcdc"/>
<text x="0" y="0" font-family="Liberation Sans" font-size="9.5" font-weight="bold" fill="#222" transform="translate(168,656) skewY(18)" textLength="20" lengthAdjust="spacingAndGlyphs">LEFT</text>
<text x="0" y="0" font-family="Liberation Sans" font-size="9.5" font-weight="bold" fill="#222" transform="translate(201,661) skewY(-18)" textLength="22" lengthAdjust="spacingAndGlyphs">FRONT</text>
<text x="0" y="0" font-family="Liberation Sans" font-size="6" font-weight="bold" fill="#333" transform="translate(188,628) rotate(-25)">TOP</text></g></svg>
</body></html>
